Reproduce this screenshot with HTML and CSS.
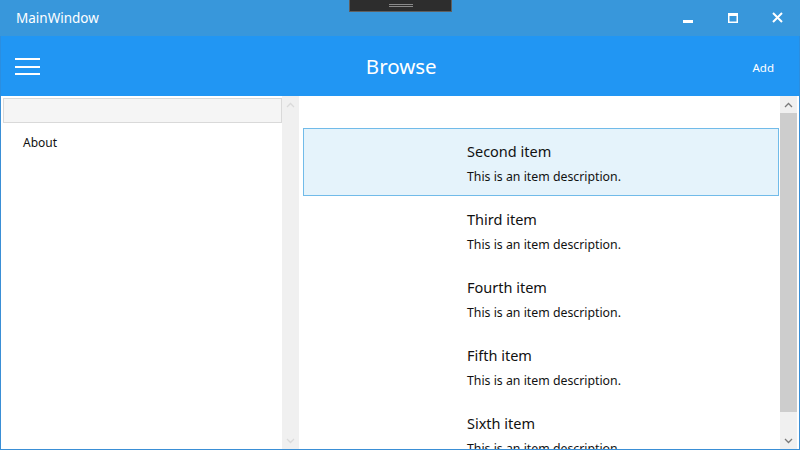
FILE: index.html
```html
<!DOCTYPE html>
<html lang="en">
<head>
	<meta charset="UTF-8">
	<title>MainWindow</title>
	<link rel="stylesheet" href="styles.css">
</head>
<body>
	<main class="window">
		<header class="titlebar">
			<div class="title">MainWindow</div>
			<div class="grip"><span></span></div>
			<div class="controls">
				<div class="ctl">
					<svg width="10" height="10" viewBox="0 0 10 10"><rect x="0" y="7" width="10" height="3" fill="#fff"/></svg>
				</div>
				<div class="ctl">
					<svg width="10" height="10" viewBox="0 0 10 10"><rect x="0.75" y="0.75" width="8.5" height="8.5" fill="none" stroke="#fff" stroke-width="1.5"/><rect x="0" y="0" width="10" height="3" fill="#fff"/></svg>
				</div>
				<div class="ctl">
					<svg width="11" height="11" viewBox="0 0 11 11"><path d="M1 1 L10 10 M10 1 L1 10" stroke="#fff" stroke-width="2"/></svg>
				</div>
			</div>
		</header>
		<nav class="appbar">
			<div class="burger"><span></span><span></span><span></span></div>
			<div class="pagetitle">Browse</div>
			<div class="add">Add</div>
		</nav>
		<section class="content">
			<aside class="left">
				<div class="menu">
					<div class="search"></div>
					<div class="menuitem">About</div>
				</div>
				<div class="scroll">
					<div class="arrow">
						<svg width="9" height="6" viewBox="0 0 9 6"><path d="M1 5 L4.5 1.5 L8 5" fill="none" stroke="#dadada" stroke-width="1.3"/></svg>
					</div>
					<div class="track"></div>
					<div class="arrow">
						<svg width="9" height="6" viewBox="0 0 9 6"><path d="M1 1 L4.5 4.5 L8 1" fill="none" stroke="#dadada" stroke-width="1.3"/></svg>
					</div>
				</div>
			</aside>
			<section class="right">
				<ul class="items">
					<li class="item selected">
						<div class="name">Second item</div>
						<div class="desc">This is an item description.</div>
					</li>
					<li class="item">
						<div class="name">Third item</div>
						<div class="desc">This is an item description.</div>
					</li>
					<li class="item">
						<div class="name">Fourth item</div>
						<div class="desc">This is an item description.</div>
					</li>
					<li class="item">
						<div class="name">Fifth item</div>
						<div class="desc">This is an item description.</div>
					</li>
					<li class="item">
						<div class="name">Sixth item</div>
						<div class="desc">This is an item description.</div>
					</li>
				</ul>
				<div class="scroll">
					<div class="arrow">
						<svg width="9" height="6" viewBox="0 0 9 6"><path d="M1 5 L4.5 1.5 L8 5" fill="none" stroke="#7a7a7a" stroke-width="1.3"/></svg>
					</div>
					<div class="track"><div class="thumb"></div></div>
					<div class="arrow">
						<svg width="9" height="6" viewBox="0 0 9 6"><path d="M1 1 L4.5 4.5 L8 1" fill="none" stroke="#7a7a7a" stroke-width="1.3"/></svg>
					</div>
				</div>
			</section>
		</section>
	</main>
</body>
</html>
```
FILE: styles.css
```css
html, body {
	margin: 0;
	padding: 0;
	width: 800px;
	height: 450px;
	overflow: hidden;
	background: #fff;
	font-family: "Noto Sans", "Open Sans", sans-serif;
}
main.window {
	width: 800px;
	height: 450px;
	box-sizing: border-box;
	border: 1px solid #3a8fd6;
	border-top: none;
	display: flex;
	flex-direction: column;
	position: relative;
}

/* title bar */
header.titlebar {
	height: 36px;
	margin: 0 -1px;
	background: #3897db;
	display: flex;
	align-items: center;
	color: #fff;
	flex-shrink: 0;
}
header.titlebar .title {
	font-size: 13.5px;
	padding-left: 16px;
	flex: 1;
	margin-top: -1px;
}
header.titlebar .grip {
	position: absolute;
	top: 0; left: 348px;
	width: 101px;
	height: 11px;
	background: #2d2d2d;
	border: 1px solid #5f5f5f;
	border-top: none;
	display: flex;
	align-items: center;
	justify-content: center;
}
header.titlebar .grip span {
	width: 24px;
	height: 3px;
	border-top: 1px solid #8a8a8a;
	border-bottom: 1px solid #8a8a8a;
	box-sizing: border-box;
}
header.titlebar .controls {
	display: flex;
	height: 36px;
}
header.titlebar .ctl {
	width: 45px;
	display: flex;
	align-items: center;
	justify-content: center;
	margin-top: -1px;
}

/* app bar */
nav.appbar {
	height: 60px;
	background: #2196f3;
	display: flex;
	align-items: center;
	color: #fff;
	flex-shrink: 0;
	margin: 0 -1px;
	border-left: 1px solid #2b8ee0;
	border-right: 1px solid #2b8ee0;
}
nav.appbar .burger {
	width: 25px;
	margin-left: 14px;
	display: flex;
	flex-direction: column;
	gap: 5.5px;
	margin-top: 1px;
}
nav.appbar .burger span {
	display: block;
	height: 2px;
	background: #fff;
}
nav.appbar .pagetitle {
	flex: 1;
	text-align: center;
	font-size: 20.5px;
	margin-left: 10px;
	margin-top: 0;
}
nav.appbar .add {
	font-size: 11.5px;
	padding-right: 25px;
	margin-top: 3px;
}

/* content */
section.content {
	flex: 1;
	display: flex;
	min-height: 0;
}
aside.left {
	width: 298px;
	display: flex;
}
aside.left .menu {
	flex: 1;
	padding: 2px 0 0 2px;
}
aside.left .search {
	height: 23px;
	background: #f5f5f5;
	border: 1px solid #d9d9d9;
}
aside.left .menuitem {
	font-size: 12px;
	color: #111;
	padding: 11px 0 0 20px;
}
.scroll {
	width: 17px;
	background: #f0f0f0;
	display: flex;
	flex-direction: column;
}
.scroll .arrow {
	height: 17px;
	display: flex;
	align-items: center;
	justify-content: center;
}
.scroll .track {
	flex: 1;
	display: flex;
	flex-direction: column;
}
.scroll .thumb {
	height: 299px;
	background: #cdcdcd;
}
section.right {
	flex: 1;
	display: flex;
	margin-left: 4px;
	padding-right: 2px;
	min-height: 0;
}
ul.items {
	list-style: none;
	margin: 0;
	padding: 32px 1px 0 0;
	flex: 1;
	overflow: hidden;
}
li.item {
	height: 68px;
	box-sizing: border-box;
	padding: 12px 0 0 163px;
	border: 1px solid transparent;
	color: #111;
}
li.item.selected {
	background: #e5f3fb;
	border-color: #71bbe9;
}
li.item .name {
	font-size: 14.5px;
	line-height: 20px;
}
li.item .desc {
	font-size: 12.3px;
	line-height: 16px;
	margin-top: 8px;
}
```
